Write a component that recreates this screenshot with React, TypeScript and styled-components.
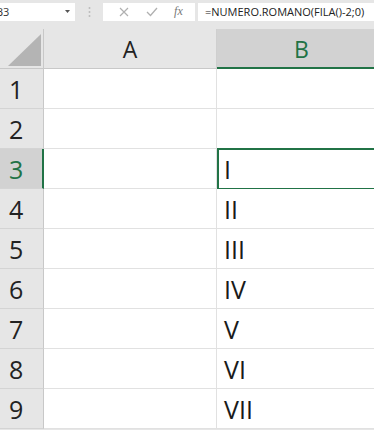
import React from "react";
import styled, { createGlobalStyle } from "styled-components";

const Global = createGlobalStyle`
  html, body { margin: 0; padding: 0; background: #ffffff; overflow: hidden; }
  body { font-family: "Open Sans", "Noto Sans", sans-serif; }
`;

const Page = styled.div`
  width: 374px;
  height: 430px;
  overflow: hidden;
  background: #e6e6e6;
  display: flex;
  flex-direction: column;
`;

const Toolbar = styled.div`
  height: 22px;
  display: flex;
  align-items: center;
  padding-top: 1px;
  box-sizing: border-box;
`;

const NameBox = styled.div`
  width: 75px;
  height: 18px;
  background: #fff;
  display: flex;
  align-items: center;
  justify-content: space-between;
  font-size: 11px;
  color: #333;
  overflow: hidden;
  padding-right: 5px;
  box-sizing: border-box;
`;

const NameText = styled.span`
  margin-left: -4px;
`;

const Dots = styled.div`
  width: 28px;
  display: flex;
  justify-content: center;
`;

const IconBox = styled.div`
  width: 92px;
  height: 18px;
  background: #fff;
  display: flex;
  align-items: center;
  justify-content: space-around;
  padding: 0 4px 0 8px;
  box-sizing: border-box;
`;

const Fx = styled.span`
  font-family: "Liberation Serif", serif;
  font-style: italic;
  font-size: 12px;
  color: #777;
`;

const FormulaBox = styled.div`
  flex: 1;
  height: 18px;
  margin-left: 3px;
  background: #fff;
  display: flex;
  align-items: center;
  padding-left: 7px;
  font-size: 11px;
  color: #222;
  white-space: nowrap;
`;

const Grid = styled.div`
  margin-top: 7px;
  display: grid;
  grid-template-columns: 44px 173px 170px;
  grid-auto-rows: 40px;
`;

const Corner = styled.div`
  background: #e6e6e6;
  border-right: 1px solid #c8c8c8;
  border-bottom: 1px solid #c8c8c8;
  position: relative;
`;

const ColHead = styled.div<{ $sel?: boolean }>`
  background: ${p => (p.$sel ? "#d2d2d2" : "#e6e6e6")};
  color: ${p => (p.$sel ? "#217346" : "#222")};
  border-bottom: ${p => (p.$sel ? "2px solid #217346" : "1px solid #c8c8c8")};
  border-right: 1px solid #cfcfcf;
  font-size: 23px;
  display: flex;
  align-items: center;
  justify-content: center;
  box-sizing: border-box;
  padding-top: ${p => (p.$sel ? "1px" : "0")};
`;

const RowHead = styled.div<{ $sel?: boolean }>`
  background: ${p => (p.$sel ? "#d2d2d2" : "#e6e6e6")};
  color: ${p => (p.$sel ? "#217346" : "#222")};
  border-right: ${p => (p.$sel ? "2px solid #217346" : "1px solid #c8c8c8")};
  border-bottom: 1px solid #d4d4d4;
  font-size: 25px;
  display: flex;
  align-items: center;
  padding-left: 9px;
  box-sizing: border-box;
`;

const Cell = styled.div<{ $sel?: boolean }>`
  background: #fff;
  border-right: 1px solid #e1e1e1;
  border-bottom: 1px solid #e1e1e1;
  font-size: 25px;
  color: #1a1a1a;
  display: flex;
  align-items: center;
  padding-left: 7px;
  box-sizing: border-box;
  ${p => (p.$sel ? "outline: 2px solid #217346; outline-offset: -2px; margin-top: -1px; height: 42px;" : "")}
`;

const rows = ["", "", "I", "II", "III", "IV", "V", "VI", "VII"];

export default function App() {
  return (
    <Page>
      <Global />
      <Toolbar>
        <NameBox>
          <NameText>B3</NameText>
          <svg width="5" height="4" viewBox="0 0 5 4"><path d="M0 0h5L2.5 3z" fill="#555" /></svg>
        </NameBox>
        <Dots>
          <svg width="3" height="12" viewBox="0 0 3 12">
            <circle cx="1.5" cy="2" r="1" fill="#bbb" />
            <circle cx="1.5" cy="6" r="1" fill="#bbb" />
            <circle cx="1.5" cy="10" r="1" fill="#bbb" />
          </svg>
        </Dots>
        <IconBox>
          <svg width="10" height="10" viewBox="0 0 10 10"><path d="M1 1l8 8M9 1l-8 8" stroke="#b0b0b0" strokeWidth="1.2" /></svg>
          <svg width="12" height="10" viewBox="0 0 12 10"><path d="M1 5l3.5 3.5L11 1" stroke="#b0b0b0" strokeWidth="1.3" fill="none" /></svg>
          <Fx>fx</Fx>
        </IconBox>
        <FormulaBox>=NUMERO.ROMANO(FILA()-2;0)</FormulaBox>
      </Toolbar>
      <Grid>
        <Corner>
          <svg width="44" height="40" viewBox="0 0 44 40" style={{ position: "absolute", left: 0, top: 0 }}>
            <path d="M8 37L41 5V37Z" fill="#b4b4b4" />
          </svg>
        </Corner>
        <ColHead>A</ColHead>
        <ColHead $sel>B</ColHead>
        {rows.map((v, i) => (
          <React.Fragment key={i}>
            <RowHead $sel={i === 2}>{i + 1}</RowHead>
            <Cell />
            <Cell $sel={i === 2}>{v}</Cell>
          </React.Fragment>
        ))}
      </Grid>
    </Page>
  );
}
